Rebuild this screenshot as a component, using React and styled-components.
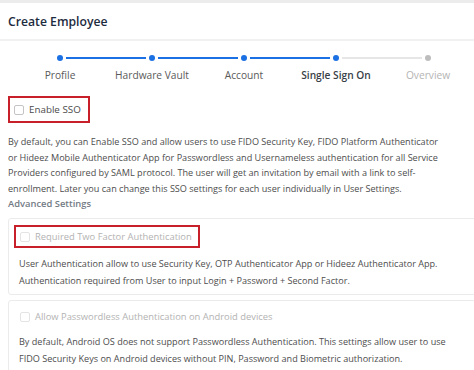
import React from 'react';
import styled, { createGlobalStyle } from 'styled-components';

const GlobalStyle = createGlobalStyle`
  html, body {
    margin: 0;
    padding: 0;
    background: #ffffff;
    overflow: hidden;
  }
  body {
    font-family: 'Open Sans', 'Noto Sans', sans-serif;
    color: #4a4a4a;
  }
`;

const Dialog = styled.div`
  width: 484px;
  border-top: 3px solid #ececec;
  background: #fff;
`;

const Header = styled.div`
  height: 36px;
  display: flex;
  align-items: center;
  padding-left: 8px;
  border-bottom: 2px solid #f1f1f1;
`;

const Title = styled.h2`
  margin: 0;
  font-size: 12.2px;
  font-weight: 600;
  color: #1d2b3e;
`;

const Body = styled.div`
  padding: 0 8px;
`;

const Stepper = styled.div`
  display: grid;
  grid-template-columns: repeat(5, 92px);
  margin: 13px 0 0 6px;
`;

const Step = styled.div`
  display: flex;
  flex-direction: column;
  align-items: center;
`;

const Track = styled.div`
  display: flex;
  align-items: center;
  width: 100%;
  height: 8px;
`;

const Line = styled.div`
  flex: 1;
  height: 2px;
  margin: ${p => (p.$side === 'left' ? '0 3px 0 0' : '0 0 0 3px')};
  background: ${p => p.$color};
`;

const Dot = styled.div`
  width: 6px;
  height: 6px;
  border-radius: 50%;
  background: ${p => p.$color};
`;

const StepLabel = styled.div`
  margin-top: 7px;
  font-size: ${p => (p.$active ? '10.2px' : '10.2px')};
  line-height: 13px;
  white-space: nowrap;
  font-weight: ${p => (p.$active ? 600 : 400)};
  color: ${p => (p.$active ? '#3a3f47' : p.$pending ? '#b4b4b4' : '#5a5a5a')};
`;

const CheckRow = styled.div`
  margin-top: ${p => p.$top || '0'};
  display: flex;
`;

const Highlight = styled.div`
  display: inline-flex;
  align-items: center;
  gap: 5px;
  border: 2px solid #c8202a;
  padding: ${p => p.$pad || '5px 7px 5px 4px'};
`;

const Box = styled.span`
  width: 8px;
  height: 8px;
  border: 1px solid ${p => (p.$disabled ? '#e4e4e4' : '#c4c4c4')};
  border-radius: 2px;
  background: #fff;
`;

const CheckText = styled.span`
  font-size: ${p => p.$size || '9.8px'};
  line-height: 13px;
  color: ${p => (p.$disabled ? '#b3b3b3' : '#4a4a4a')};
`;

const Paragraph = styled.p`
  margin: ${p => p.$margin || '11px 0 0 0'};
  font-size: 9.1px;
  line-height: ${p => p.$lh || '15.5px'};
  color: #4d4d4d;
`;

const TextLine = styled.span`
  display: block;
  white-space: nowrap;
`;

const SectionTitle = styled.div`
  margin-top: 1px;
  font-size: 9.4px;
  line-height: 14px;
  font-weight: 600;
  color: #737b85;
`;

const Card = styled.div`
  margin-top: ${p => p.$top || '6px'};
  border: 1px solid #ebebeb;
  border-radius: 3px;
  padding: ${p => p.$pad || '6px 10px 5px 5px'};
`;

const PlainCheck = styled.div`
  display: flex;
  align-items: center;
  gap: 5px;
  padding: 0 6px 0 6px;
`;

const steps = [
  { label: 'Profile', state: 'done' },
  { label: 'Hardware Vault', state: 'done' },
  { label: 'Account', state: 'done' },
  { label: 'Single Sign On', state: 'active' },
  { label: 'Overview', state: 'pending' },
];

const BLUE = '#1b70e3';
const GREY = '#e6e6e6';

const ssoText = [
  'By default, you can Enable SSO and allow users to use FIDO Security Key, FIDO Platform Authenticator',
  'or Hideez Mobile Authenticator App for Passwordless and Usernameless authentication for all Service',
  'Providers configured by SAML protocol. The user will get an invitation by email with a link to self-',
  'enrollment. Later you can change this SSO settings for each user individually in User Settings.',
];

const twoFactorText = [
  'User Authentication allow to use Security Key, OTP Authenticator App or Hideez Authenticator App.',
  'Authentication required from User to input Login + Password + Second Factor.',
];

const androidText = [
  'By default, Android OS does not support Passwordless Authentication. This settings allow user to use',
  'FIDO Security Keys on Android devices without PIN, Password and Biometric authorization.',
];

export default function App() {
  return (
    <>
      <GlobalStyle />
      <Dialog>
        <Header>
          <Title>Create Employee</Title>
        </Header>
        <Body>
          <Stepper>
            {steps.map((s, i) => {
              const leftColor = i === 0 ? 'transparent' : s.state === 'pending' ? GREY : BLUE;
              const rightColor =
                i === steps.length - 1 ? 'transparent' : s.state === 'done' ? BLUE : GREY;
              return (
                <Step key={s.label}>
                  <Track>
                    <Line $side="left" $color={leftColor} />
                    <Dot $color={s.state === 'pending' ? '#bdbdbd' : BLUE} />
                    <Line $side="right" $color={rightColor} />
                  </Track>
                  <StepLabel $active={s.state === 'active'} $pending={s.state === 'pending'}>
                    {s.label}
                  </StepLabel>
                </Step>
              );
            })}
          </Stepper>

          <CheckRow $top="14px">
            <Highlight>
              <Box />
              <CheckText>Enable SSO</CheckText>
            </Highlight>
          </CheckRow>
          <Paragraph>
            {ssoText.map(t => (
              <TextLine key={t}>{t}</TextLine>
            ))}
          </Paragraph>

          <SectionTitle>Advanced Settings</SectionTitle>

          <Card $top="7px">
            <CheckRow>
              <Highlight $pad="3px 6px 3px 4px">
                <Box $disabled />
                <CheckText $disabled $size="9.4px">Required Two Factor Authentication</CheckText>
              </Highlight>
            </CheckRow>
            <Paragraph $margin="7px 0 0 5px" $lh="17px">
              {twoFactorText.map(t => (
                <TextLine key={t}>{t}</TextLine>
              ))}
            </Paragraph>
          </Card>

          <Card $top="5px" $pad="9px 10px 12px 5px">
            <PlainCheck>
              <Box $disabled />
              <CheckText $disabled $size="9.4px">Allow Passwordless Authentication on Android devices</CheckText>
            </PlainCheck>
            <Paragraph $margin="10px 0 0 5px" $lh="17px">
              {androidText.map(t => (
                <TextLine key={t}>{t}</TextLine>
              ))}
            </Paragraph>
          </Card>
        </Body>
      </Dialog>
    </>
  );
}
